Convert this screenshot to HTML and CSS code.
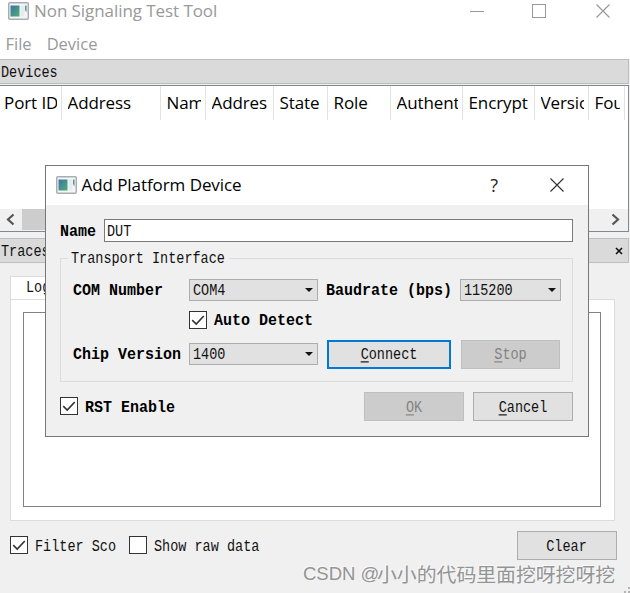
FILE: index.html
```html
<!DOCTYPE html>
<html lang="en">
<head>
<meta charset="utf-8">
<title>Non Signaling Test Tool</title>
<link rel="stylesheet" href="styles.css">
</head>
<body>
<svg class="defs" width="0" height="0">
  <defs>
    <linearGradient id="teal" x1="0" y1="0" x2="1" y2="1"><stop offset="0" stop-color="#3b73a8"/><stop offset="1" stop-color="#4fae74"/></linearGradient>
    <symbol id="app" viewBox="0 0 21 18">
      <rect x=".75" y=".75" width="19.5" height="16.5" rx="1" fill="#f4f6f8" stroke="#a9adb3" stroke-width="1.5"/>
      <rect x="2.5" y="3.5" width="9" height="11" fill="url(#teal)"/>
      <rect x="12.5" y="3.5" width="4" height="11" fill="#e6ebef"/>
      <path d="M17 3.5h1.5v7L17 8z" fill="#4c9a8a"/>
    </symbol>
    <symbol id="check" viewBox="0 0 18 18"><path d="M2.500 9.200l4.500 4.300L15.500 4.500" fill="none" stroke="#333" stroke-width="1.8"/></symbol>
    <symbol id="close" viewBox="0 0 14 14"><path d="M.5.5l13 13M13.500.5l-13 13" fill="none" stroke="currentColor" stroke-width="1.15"/></symbol>
  </defs>
</svg>
<main class="window">
  <header class="titlebar">
    <svg class="app-icon"><use href="#app"/></svg>
    <span class="title">Non Signaling Test Tool</span>
    <div class="controls">
      <i class="minimize"></i><i class="maximize"></i>
      <svg class="close"><use href="#close"/></svg>
    </div>
  </header>
  <nav class="menu"><span>File</span><span>Device</span></nav>
  <div class="dock-title"><span class="mono">Devices</span></div>
  <section class="devices">
    <div class="columns">
      <div><span>Port ID</span></div><div><span>Address</span></div><div><span>Name</span></div><div><span>Addres</span></div><div><span>State</span></div><div><span>Role</span></div><div><span>Authent</span></div><div><span>Encrypt</span></div><div><span>Version</span></div><div><span>Foun</span></div>
    </div>
    <div class="scrollbar">
      <svg width="22" height="21"><path d="M13.500 5.500L8 10.500l5.500 5" fill="none" stroke="#555" stroke-width="2.2"/></svg>
      <div class="thumb"></div>
      <svg width="24" height="21"><path d="M8.500 5.500l5.500 5-5.500 5" fill="none" stroke="#555" stroke-width="2.2"/></svg>
    </div>
  </section>
  <div class="dock-title traces-title"><span class="mono">Traces</span>
    <svg width="8" height="8"><path d="M1 1l6 6M7 1L1 7" stroke="#111" stroke-width="1.6"/></svg></div>
  <section class="traces">
    <div class="tab"><span class="mono">Log</span></div>
    <div class="pane"><div class="log"></div></div>
    <div class="filters">
      <i class="box"><svg><use href="#check"/></svg></i><span class="mono filter-label">Filter Sco</span>
      <i class="box"></i><span class="mono">Show raw data</span>
      <div class="button clear"><span class="mono">Clear</span></div>
    </div>
  </section>
</main>

<section class="dialog">
  <header class="dialog-title">
    <svg class="app-icon"><use href="#app"/></svg>
    <span class="title">Add Platform Device</span>
    <span class="help">?</span>
    <svg class="close"><use href="#close"/></svg>
  </header>
  <div class="dialog-body">
    <div class="name-row"><span class="bold">Name</span><div class="input"><span class="mono">DUT</span></div></div>
    <div class="group">
      <div class="legend"><span class="mono">Transport Interface</span></div>
      <div class="form">
        <span class="bold">COM Number</span>
        <div class="combo"><span class="mono">COM4</span><i class="arrow"></i></div>
        <span class="bold">Baudrate (bps)</span>
        <div class="combo"><span class="mono">115200</span><i class="arrow"></i></div>
        <div class="auto"><i class="box"><svg><use href="#check"/></svg></i><span class="bold">Auto Detect</span></div>
        <span class="bold">Chip Version</span>
        <div class="combo"><span class="mono">1400</span><i class="arrow"></i></div>
        <div class="button focus"><span class="mono"><u>C</u>onnect</span></div>
        <div class="button disabled"><span class="mono"><u>S</u>top</span></div>
      </div>
    </div>
    <div class="footer">
      <i class="box"><svg><use href="#check"/></svg></i><span class="bold">RST Enable</span>
      <div class="button disabled ok"><span class="mono"><u>O</u>K</span></div>
      <div class="button"><span class="mono"><u>C</u>ancel</span></div>
    </div>
  </div>
</section>
<div class="watermark"><span class="latin">CSDN @</span>小小的代码里面挖呀挖呀挖</div>
<svg class="grip" width="6" height="7"><path d="M4 0h2v2H4zM0 4h2v2H0zM4 4h2v2H4z" fill="#b5b5b5"/></svg>
</body>
</html>
```
FILE: styles.css
```css
* { box-sizing: border-box; }
body { margin: 0; width: 630px; height: 593px; overflow: hidden; position: relative; background: #f0f0f0; color: #111; font-family: "Open Sans", "Noto Sans", sans-serif; font-size: 17px; }
svg { display: block; flex: none; }
.defs { position: absolute; }
i { display: block; flex: none; }
.mono, .bold { display: inline-block; white-space: pre; font-family: "Liberation Mono", monospace; line-height: 18px; }
.mono { font-size: 13.5px; transform: translateY(1.5px) scaleY(1.16); }
.bold { font-size: 15px; font-weight: 700; transform: translateY(1.5px) scaleY(1.06); color: #000; }
u { text-decoration-thickness: 1px; text-underline-offset: 2px; }

.window { display: flex; flex-direction: column; height: 593px; }
.titlebar { height: 26px; display: flex; align-items: flex-start; padding: 2px 20px 0 8px; background: #fff; color: #999; }
.app-icon { width: 21px; height: 18px; }
.title { line-height: 20px; font-size: 17px; letter-spacing: -.07px; white-space: nowrap; }
.titlebar .title { margin: -1px 0 0 5px; }
.controls { display: flex; margin-left: auto; padding-top: 2px; }
.minimize { width: 14px; height: 1px; background: #999; margin: 7px 48px 0 0; }
.maximize { width: 14px; height: 14px; border: 1px solid #999; margin-right: 50px; }
.close { width: 14px; height: 14px; }
.menu { height: 33px; background: #fff; color: #999; display: flex; gap: 15px; padding: 7px 0 0 5.500px; font-size: 16.500px; line-height: 22px; }
.dock-title { height: 25px; width: 629px; background: #dadada; border: 1px solid #bdbdbd; border-left: 0; display: flex; align-items: center; padding-left: 1px; }
.devices { width: 629px; height: 147px; margin-top: 1px; background: #fff; border: 1px solid #828790; border-left: 0; display: flex; flex-direction: column; justify-content: space-between; }
.columns { display: grid; grid-template-columns: 62px 99px 45px 68px 54px 63px 72px 72px 54px 36px; height: 34px; color: #000; }
.columns div { border-right: 1px solid #e2e2e2; padding: 6px 4px 0 5.500px; line-height: 22px; font-size: 17px; letter-spacing: -.1px; }
.columns div:first-child { padding-left: 4px; }
.columns span { display: block; overflow: hidden; white-space: nowrap; }
.scrollbar { height: 22px; display: flex; background: #f0f0f0; }
.thumb { flex: 0 1 500px; background: #cdcdcd; height: 21px; }
.scrollbar svg:last-child { margin-left: auto; }
.traces-title { margin-top: 6px; padding-right: 5px; justify-content: space-between; }
.traces { padding: 13px 14px 0 10px; }
.tab { width: 64px; height: 24px; background: #fff; border: 1px solid #dcdcdc; border-bottom: 0; padding: 0 0 0 15px; display: flex; align-items: center; }
.tab .mono { margin-top: -3px; }
.pane { width: 605px; height: 222px; margin-top: -1px; background: #fff; border: 1px solid #dcdcdc; padding: 12px 13px 12px 12px; }
.log { height: 195px; border: 1px solid #828282; }
.filters { display: flex; align-items: center; height: 29px; margin-top: 10px; }
.box { width: 18px; height: 18px; background: #fff; border: 1px solid #333; margin: -1px 7px 0 0; }
.box svg { width: 16px; height: 16px; }
.filter-label { margin-right: 13px; }
.button { width: 100px; height: 29px; flex: none; display: flex; align-items: center; justify-content: center; background: #e1e1e1; border: 1px solid #adadad; }
.clear { margin-left: auto; }
.filters .clear { margin-right: -.5px; }
.disabled { background: #ccc; border-color: #bfbfbf; color: #838383; }
.focus { width: 124px; border: 2px solid #0078d7; }

.dialog { position: absolute; left: 45px; top: 165px; width: 544px; height: 272px; background: #f0f0f0; border: 1px solid #777; }
.dialog-title { height: 39px; background: #fff; display: flex; align-items: center; padding: 0 24px 1px 9.500px; color: #000; }
.dialog-title .title { margin-left: 5px; }
.help { margin-left: auto; margin-right: 52px; color: #222; font-size: 18px; }
.dialog-title .close { color: #333; }
.dialog-body { padding: 14px 15px 0 14px; }
.name-row { display: flex; align-items: center; gap: 8px; height: 23px; }
.input { flex: 1; height: 23px; background: #fff; border: 1px solid #7a7a7a; padding: 0 2px; display: flex; align-items: center; }
.group { height: 124px; margin-top: 16px; border: 1px solid #dcdcdc; }
.legend { width: max-content; height: 18px; margin: -9px 0 0 7px; padding: 0 4px 0 3px; background: #f0f0f0; display: flex; align-items: center; }
.legend .mono { margin-top: -2px; }
.form { display: grid; grid-template-columns: 116px 138px 133px 101px; grid-template-rows: 30px 30px 38px; margin: 7px 0 0 12px; align-items: center; }
.combo { height: 22px; width: 129px; border: 1px solid #adadad; background: #e1e1e1; display: flex; justify-content: space-between; align-items: center; padding: 0 4px 0 3px; }
.form .combo:nth-child(4) { width: 101px; }
.form .bold:nth-child(3) { margin-left: -1px; }
.form .disabled { margin-left: 1px; width: 99px; }
.arrow { border: 4px solid transparent; border-top-color: #111; border-bottom: 0; }
.auto { grid-column: 2 / 5; display: flex; align-items: center; }
.footer { display: flex; align-items: center; height: 29px; margin-top: 10px; }
.ok { margin-left: auto; margin-right: 9px; }
.watermark { position: absolute; left: 303px; top: 560px; display: flex; font: 400 19.850px/28px "Noto Sans CJK SC", sans-serif; color: #949494; text-shadow: -1px -1px 0 #fafafa; white-space: nowrap; }
.latin { width: 74px; font-family: "Liberation Sans", sans-serif; font-size: 18.500px; white-space: pre; }
.grip { position: absolute; left: 624px; top: 587px; }
```
